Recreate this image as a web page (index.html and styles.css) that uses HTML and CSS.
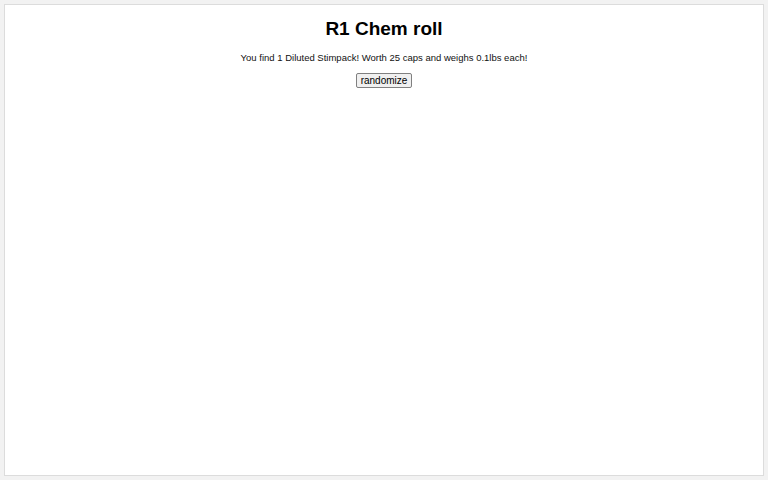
FILE: index.html
```html
<!DOCTYPE html>
<html>
<head>
<meta charset="utf-8">
<link rel="stylesheet" href="styles.css">
</head>
<body>
<div class="panel">
  <h1 class="title">R1 Chem roll</h1>
  <p class="result">You find 1 Diluted Stimpack! Worth 25 caps and weighs 0.1lbs each!</p>
  <button class="btn">randomize</button>
</div>
</body>
</html>
```
FILE: styles.css
```css
html, body { margin: 0; padding: 0; }
body {
  background: #f2f2f2;
  padding: 4px 4px 4px 4px;
  height: 480px;
  box-sizing: border-box;
  font-family: "Liberation Sans", Arial, sans-serif;
}
.panel {
  background: #fff;
  border: 1px solid #dcdcdc;
  height: 100%;
  box-sizing: border-box;
  text-align: center;
}
.title {
  font-size: 19px;
  font-weight: bold;
  margin: 0;
  padding-top: 13px;
  line-height: 22px;
  color: #000;
}
.result {
  font-size: 9.5px;
  margin: 12px 0 0 0;
  line-height: 12px;
  color: #111;
}
.btn {
  margin-top: 9px;
  font-family: "Liberation Sans", Arial, sans-serif;
  font-size: 10px;
  padding: 1px 4px;
  line-height: 11px;
  border: 1px solid #808080;
  border-radius: 2px;
  background: #f0f0f0;
  color: #000;
}
```
